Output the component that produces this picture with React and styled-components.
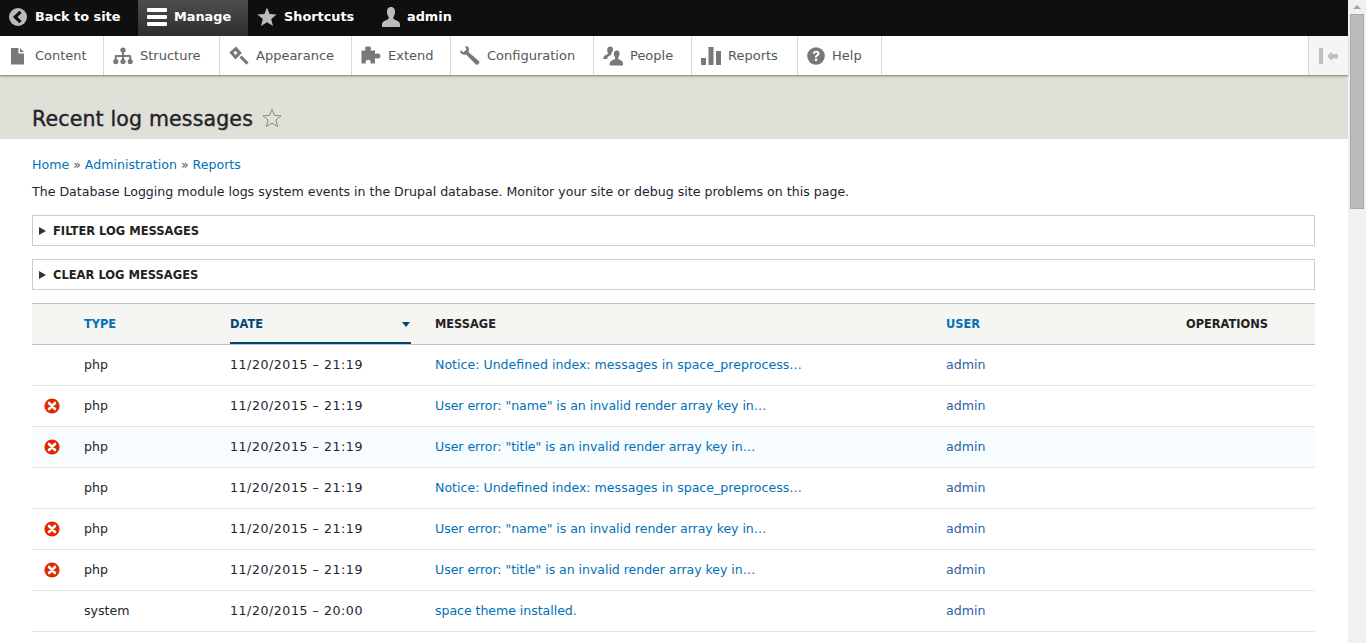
import React from 'react';
import styled, { createGlobalStyle } from 'styled-components';

const GlobalStyle = createGlobalStyle`
    html, body {
        margin: 0;
        height: 643px;
        overflow: hidden;
        background: #fff;
    }
    body {
        font-family: "DejaVu Sans", sans-serif;
        font-size: 12.58px;
        color: #222330;
    }
    * { box-sizing: border-box; }
`;

const Window = styled.div`
    display: flex;
    height: 643px;
    overflow: hidden;
`;

const Page = styled.div`
    flex: 1;
    min-width: 0;
`;

const Scrollbar = styled.div`
    width: 18px;
    flex: none;
    background: #f1f1f1;
    display: flex;
    flex-direction: column;
    align-items: center;
`;

const ScrollArrow = styled.div`
    height: 14px;
    width: 100%;
    display: flex;
    align-items: center;
    justify-content: center;
    &::before {
        content: '';
        border-left: 4px solid transparent;
        border-right: 4px solid transparent;
        border-bottom: 4px solid #a3a3a3;
    }
`;

const ScrollThumb = styled.div`
    width: 14px;
    height: 195px;
    background: #bcbcbc;
    border: 1px solid #a8a8a8;
`;

const TopBar = styled.div`
    height: 36px;
    background: #0f0f0f;
    display: flex;
    color: #fff;
    font-weight: 700;
    font-size: 12.85px;
`;

const TopItem = styled.div`
    height: 36px;
    width: ${p => p.$w}px;
    padding: 0 0 2px 9px;
    display: flex;
    align-items: center;
    gap: ${p => p.$gap || 8}px;
    background: ${p => p.$active ? 'linear-gradient(#4e4e4e, #2e2e2e)' : 'transparent'};
`;

const TopLabel = styled.span`
    padding-bottom: 2px;
`;

const Tray = styled.div`
    height: 39px;
    background: #fff;
    display: flex;
    box-shadow: 0 1px 1px #9a9a92, 0 3px 2px -1px #b8b8b0;
    position: relative;
`;

const TrayItem = styled.div`
    width: ${p => p.$w}px;
    height: 39px;
    border-right: 1px solid #d8d8d8;
    display: flex;
    align-items: center;
    padding-left: ${p => p.$pad || 9}px;
    gap: ${p => p.$gap || 7}px;
    color: #565656;
    font-size: 13px;
`;

const TraySpacer = styled.div`
    flex: 1;
`;

const CollapseButton = styled.div`
    width: 40px;
    height: 39px;
    background: #f5f5f5;
    border-left: 1px solid #d8d8d8;
    display: flex;
    align-items: center;
    justify-content: center;
`;

const Head = styled.div`
    height: 64px;
    background: #e0e0d8;
    padding: 31px 32px 0;
    display: flex;
    align-items: flex-start;
    gap: 9px;
`;

const Title = styled.h1`
    margin: 0;
    font-size: 20.5px;
    line-height: 26px;
    font-weight: 400;
    letter-spacing: 0.16px;
    color: #232429;
    -webkit-text-stroke: 0.4px #232429;
`;

const StarWrap = styled.div`
    margin-top: 2px;
    height: 20px;
    display: flex;
`;

const Content = styled.div`
    padding: 0 33px 0 32px;
`;

const Breadcrumb = styled.div`
    margin-top: 18px;
    line-height: 16px;
    color: #555;
`;

const Link = styled.a`
    color: ${p => p.$dark ? '#2b62a4' : '#0071b8'};
    letter-spacing: ${p => p.$tight ? '-0.055px' : 'normal'};
    text-decoration: none;
`;

const Intro = styled.p`
    margin: 11px 0 0;
    line-height: 16px;
`;

const Details = styled.div`
    height: 31px;
    border: 1px solid #ccc;
    margin-top: ${p => p.$top}px;
    display: flex;
    align-items: center;
    padding-left: 6px;
    gap: 7px;
    font-weight: 700;
    font-size: 11.5px;
    color: #222;
    &::before {
        content: '';
        border-top: 4px solid transparent;
        border-bottom: 4px solid transparent;
        border-left: 7px solid #333;
    }
`;

const Table = styled.div`
    margin-top: 13px;
    width: 1283px;
`;

const columns = '52px 146px 205px 511px 240px 129px';

const HeadRow = styled.div`
    display: grid;
    grid-template-columns: ${columns};
    height: 42px;
    background: #f5f5f2;
    border-top: 1px solid #bfbfba;
    border-bottom: 1px solid #bfbfba;
    font-weight: 700;
    font-size: 11.4px;
`;

const HeadCell = styled.div`
    color: ${p => p.$color || '#222'};
    display: flex;
    align-items: center;
`;

const SortCell = styled.div`
    margin-right: 24px;
    padding-top: 2px;
    border-bottom: 2px solid #004875;
    color: #004875;
    display: flex;
    align-items: center;
    justify-content: space-between;
    &::after {
        content: '';
        margin-right: 1px;
        border-left: 4px solid transparent;
        border-right: 4px solid transparent;
        border-top: 5px solid #004875;
    }
`;

const Row = styled.div`
    display: grid;
    grid-template-columns: ${columns};
    height: 41px;
    padding-bottom: 2px;
    align-items: center;
    border-bottom: 1px solid #e6e4df;
    background: ${p => p.$hover ? '#f7fcff' : '#fff'};
`;

const IconCell = styled.div`
    padding: 2px 0 0 12px;
    display: flex;
    align-items: center;
`;

const DateCell = styled.div`
    letter-spacing: 0.55px;
`;

const Gray = '#787878';

const BackIcon = () => (
    <svg width="18" height="18" viewBox="0 0 18 18">
        <circle cx="9" cy="9" r="9" fill="#bbb" />
        <path d="M11.5 3.8 L6.2 9 L11.5 14.2" fill="none" stroke="#0f0f0f" strokeWidth="3.2" />
    </svg>
);

const BarsIcon = () => (
    <svg width="20" height="20" viewBox="0 0 20 20" fill="#fff">
        <rect y="1" width="20" height="4" rx="1" />
        <rect y="8" width="20" height="4" rx="1" />
        <rect y="15" width="20" height="4" rx="1" />
    </svg>
);

const StarIcon = () => (
    <svg width="20" height="20" viewBox="0 0 20 20">
        <path d="M10 0.5 L12.6 7 L19.6 7.5 L14.2 12 L16 19 L10 15.2 L4 19 L5.8 12 L0.4 7.5 L7.4 7 Z" fill="#bbb" />
    </svg>
);

const UserIcon = () => (
    <svg width="20" height="20" viewBox="0 0 20 20">
        <path d="M10 0 C13 0 14.3 2.4 14 5.5 C13.8 8 12.6 9.6 12.2 10.6 C12.2 12.4 14 13 16 13.8 C18.4 14.8 19 16 19 18 L19 20 L1 20 L1 18 C1 16 1.6 14.8 4 13.8 C6 13 7.8 12.4 7.8 10.6 C7.4 9.6 6.2 8 6 5.5 C5.7 2.4 7 0 10 0 Z" fill="#bbb" />
    </svg>
);

const FileIcon = () => (
    <svg width="17" height="18" viewBox="0 0 17 18">
        <path d="M2 1 L9.4 1 L9.4 6.6 L15 6.6 L15 17.4 L2 17.4 Z M11 1 L15 5 L11 5 Z" fill={Gray} />
    </svg>
);

const StructureIcon = () => (
    <svg width="20" height="18" viewBox="0 0 20 18" fill={Gray}>
        <circle cx="10" cy="3" r="2.6" />
        <circle cx="2.8" cy="14.6" r="2.6" />
        <circle cx="10" cy="14.6" r="2.6" />
        <circle cx="17.2" cy="14.6" r="2.6" />
        <path d="M9 3h2v5h6.2a1 1 0 0 1 1 1v5h-2v-4H11v4H9v-4H3.8v4h-2V9a1 1 0 0 1 1-1H9z" />
    </svg>
);

const BrushIcon = () => (
    <svg width="20" height="20" viewBox="0 0 20 20">
        <path d="M0.4 6.6 L7 0.4 L12.8 7 L6.4 13.4 Z M6.4 4.8 L4.4 6.8 L6.6 9 L8.6 7 Z" fill={Gray} fillRule="evenodd" />
        <path d="M10.4 11.6 L12.6 9.6 L19.6 16.6 L17.4 18.8 Z" fill={Gray} />
    </svg>
);

const PuzzleIcon = () => (
    <svg width="20" height="20" viewBox="0 0 20 20">
        <path d="M0.5 4.6 H4.6 C4.4 3.6 4 3.2 4 2 C4 0.8 5.4 0.4 7 0.4 C8.6 0.4 10 0.8 10 2 C10 3.2 9.6 3.6 9.4 4.6 H14 V8 C15 7.8 15.6 7.4 16.8 7.4 C18.2 7.4 19.4 8.4 19.4 10 C19.4 11.6 18.2 12.6 16.8 12.6 C15.6 12.6 15 12.2 14 12 V17.6 H9.6 C10 15.8 9.4 13.8 7.2 13.8 C5 13.8 4.4 15.8 4.8 17.6 H0.5 Z" fill={Gray} />
    </svg>
);

const WrenchIcon = () => (
    <svg width="20" height="20" viewBox="0 0 20 20">
        <path d="M4.8 0.4 L8 0.6 C9.2 2.4 9.2 4.4 8.4 6 L19.4 15.6 C19.8 16.8 18 19.2 16.4 19 L6 8.4 C4 9.2 1.8 8.6 0.4 6.8 L0.4 4 L3.4 6.6 L6.6 3.6 Z" fill={Gray} />
    </svg>
);

const PeopleIcon = () => (
    <svg width="20" height="20" viewBox="0 0 20 20" fill={Gray}>
        <path d="M7.4 0.6 C9.6 0.6 10.4 2.6 9.8 4.8 C9.4 6 8.4 6.8 8.4 8 C8.2 9 7 9.6 5.8 10.2 C4.6 10.8 4.4 11.6 4.2 13 L0.2 13 C0.2 10.6 1.2 9.8 2.8 9 C4 8.4 5 8 5 7 C4.4 5.8 4 4.8 4.2 3.4 C4.4 1.6 5.6 0.6 7.4 0.6 Z" />
        <path d="M13.8 4.4 C16 4.4 17 6.2 16.6 8.4 C16.4 9.8 15.2 10.8 15.2 12.2 C15.2 13.4 17 13.8 18.2 14.4 C19.6 15.2 20 16.4 20 19.4 L6.6 19.4 C6.6 16.4 7.2 15.2 8.8 14.4 C10 13.8 12.2 13.4 12.2 12.2 C12.2 10.8 11 9.8 10.8 8.4 C10.6 6.2 11.6 4.4 13.8 4.4 Z" />
    </svg>
);

const BarsChartIcon = () => (
    <svg width="20" height="20" viewBox="0 0 20 20" fill={Gray}>
        <rect x="0" y="12" width="5" height="7" />
        <rect x="7.5" y="1" width="5" height="18" />
        <rect x="15" y="5" width="5" height="14" />
    </svg>
);

const HelpIcon = () => (
    <svg width="18" height="18" viewBox="0 0 18 18">
        <circle cx="9" cy="9" r="8.8" fill={Gray} />
        <path d="M5.8 6.6 C6 4.6 7.4 3.8 9.2 3.8 C11.2 3.8 12.6 5 12.6 6.6 C12.6 8.8 10 8.8 10 10.6 L8 10.6 C7.8 8 10.4 7.8 10.4 6.6 C10.4 5.8 9.9 5.6 9.2 5.6 C8.4 5.6 8 6.1 7.9 7 Z" fill="#fff" />
        <rect x="7.9" y="11.6" width="2.2" height="2.4" fill="#fff" />
    </svg>
);

const CollapseIcon = () => (
    <svg width="20" height="16" viewBox="0 0 20 16" fill="#bfbfbf">
        <rect x="0" y="0" width="4" height="16" />
        <path d="M8 8 L13 3.4 L13 6 L19 6 L19 10.4 L13 10.4 L13 13 Z" />
    </svg>
);

const OutlineStar = () => (
    <svg width="20" height="20" viewBox="0 0 20 20">
        <path d="M10 1.2 L12.4 7.4 L19 7.8 L13.9 12 L15.6 18.6 L10 15 L4.4 18.6 L6.1 12 L1 7.8 L7.6 7.4 Z" fill="none" stroke="#8a8a80" strokeWidth="1" />
    </svg>
);

const ErrorIcon = () => (
    <svg width="16" height="16" viewBox="0 0 16 16">
        <circle cx="8" cy="8" r="7.6" fill="#e32700" />
        <path d="M5 5 L11 11 M11 5 L5 11" stroke="#fff" strokeWidth="2.6" strokeLinecap="round" />
    </svg>
);

const trayItems = [
    { label: 'Content', w: 104, icon: <FileIcon />, gap: 9, pad: 9 },
    { label: 'Structure', w: 116, icon: <StructureIcon /> },
    { label: 'Appearance', w: 132, icon: <BrushIcon /> },
    { label: 'Extend', w: 99, icon: <PuzzleIcon /> },
    { label: 'Configuration', w: 143, icon: <WrenchIcon /> },
    { label: 'People', w: 98, icon: <PeopleIcon /> },
    { label: 'Reports', w: 106, icon: <BarsChartIcon /> },
    { label: 'Help', w: 84, icon: <HelpIcon /> },
];

const rows = [
    { type: 'php', date: '11/20/2015 – 21:19', msg: 'Notice: Undefined index: messages in space_preprocess…' },
    { type: 'php', date: '11/20/2015 – 21:19', msg: 'User error: "name" is an invalid render array key in…', error: true },
    { type: 'php', date: '11/20/2015 – 21:19', msg: 'User error: "title" is an invalid render array key in…', error: true, hover: true },
    { type: 'php', date: '11/20/2015 – 21:19', msg: 'Notice: Undefined index: messages in space_preprocess…' },
    { type: 'php', date: '11/20/2015 – 21:19', msg: 'User error: "name" is an invalid render array key in…', error: true },
    { type: 'php', date: '11/20/2015 – 21:19', msg: 'User error: "title" is an invalid render array key in…', error: true },
    { type: 'system', date: '11/20/2015 – 20:00', msg: 'space theme installed.', tight: true },
];

export default function App() {
    return (
        <Window>
            <GlobalStyle />
            <Page>
                <TopBar>
                    <TopItem $w={138}><BackIcon /><TopLabel>Back to site</TopLabel></TopItem>
                    <TopItem $w={110} $active $gap={7}><BarsIcon /><TopLabel>Manage</TopLabel></TopItem>
                    <TopItem $w={124} $gap={7}><StarIcon /><TopLabel>Shortcuts</TopLabel></TopItem>
                    <TopItem $w={120} $gap={6}><UserIcon /><TopLabel>admin</TopLabel></TopItem>
                </TopBar>
                <Tray>
                    {trayItems.map(item => (
                        <TrayItem key={item.label} $w={item.w} $gap={item.gap} $pad={item.pad}>
                            {item.icon}
                            {item.label}
                        </TrayItem>
                    ))}
                    <TraySpacer />
                    <CollapseButton><CollapseIcon /></CollapseButton>
                </Tray>
                <Head>
                    <Title>Recent log messages</Title>
                    <StarWrap><OutlineStar /></StarWrap>
                </Head>
                <Content>
                    <Breadcrumb>
                        <Link href="#">Home</Link> » <Link href="#">Administration</Link> » <Link href="#">Reports</Link>
                    </Breadcrumb>
                    <Intro>The Database Logging module logs system events in the Drupal database. Monitor your site or debug site problems on this page.</Intro>
                    <Details $top={15}>FILTER LOG MESSAGES</Details>
                    <Details $top={13}>CLEAR LOG MESSAGES</Details>
                    <Table>
                        <HeadRow>
                            <div />
                            <HeadCell $color="#0071b8">TYPE</HeadCell>
                            <SortCell>DATE</SortCell>
                            <HeadCell>MESSAGE</HeadCell>
                            <HeadCell $color="#0071b8">USER</HeadCell>
                            <HeadCell>OPERATIONS</HeadCell>
                        </HeadRow>
                        {rows.map((row, i) => (
                            <Row key={i} $hover={row.hover}>
                                <IconCell>{row.error && <ErrorIcon />}</IconCell>
                                <div>{row.type}</div>
                                <DateCell>{row.date}</DateCell>
                                <div><Link href="#" $tight={row.error || row.tight}>{row.msg}</Link></div>
                                <div><Link href="#" $dark>admin</Link></div>
                                <div />
                            </Row>
                        ))}
                    </Table>
                </Content>
            </Page>
            <Scrollbar>
                <ScrollArrow />
                <ScrollThumb />
            </Scrollbar>
        </Window>
    );
}
